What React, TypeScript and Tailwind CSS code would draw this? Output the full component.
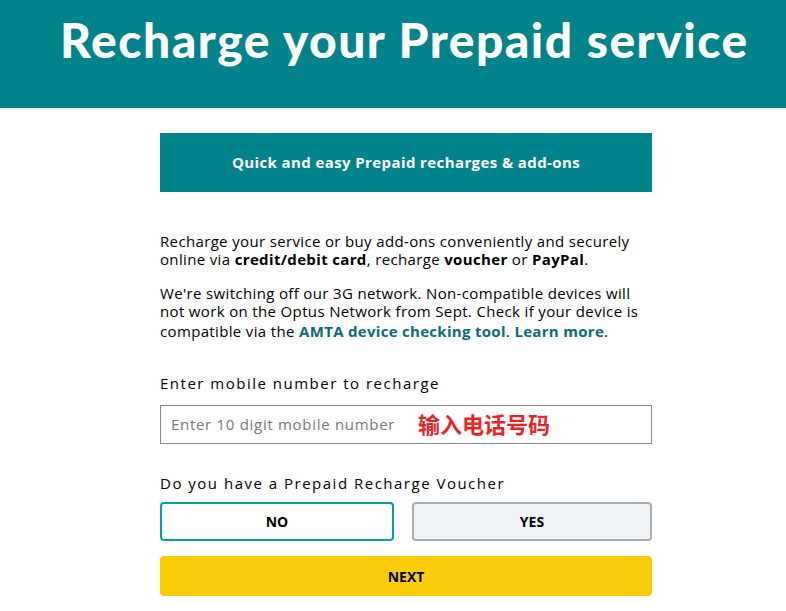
import React, { useState } from 'react';

const App: React.FC = () => {
  const [hasVoucher, setHasVoucher] = useState<'no' | 'yes'>('no');
  const [mobile, setMobile] = useState('');

  return (
    <div className="min-h-screen bg-white font-['Open_Sans','Noto_Sans_CJK_SC',sans-serif] text-black">
      <header className="h-[108px] bg-[#00838a] pl-[60px] pt-[11px]">
        <h1 className="font-['Lato',sans-serif] text-[48px] font-black leading-[58px] tracking-[1.5px] text-white">
          Recharge your Prepaid service
        </h1>
      </header>

      <main className="ml-[160px] w-[492px] pt-[25px]">
        <div className="flex h-[59px] items-center justify-center bg-[#00838a]">
          <p className="text-[15px] font-bold tracking-[0.4px] text-white">Quick and easy Prepaid recharges &amp; add-ons</p>
        </div>

        <p className="mt-[40px] text-[15px] leading-[18px] tracking-[0.35px]">
          Recharge your service or buy add-ons conveniently and securely online via{' '}
          <b>credit/debit card</b>, recharge <b>voucher</b> or <b>PayPal</b>.
        </p>
        <p className="mt-[16px] text-[15px] leading-[18px] tracking-[0.35px]">
          We're switching off our 3G network. Non-compatible devices will not work on the Optus Network from
          Sept. Check if your device is compatible via the{' '}
          <a href="#" className="text-[15px] font-bold leading-[22px] tracking-[0.3px] text-[#0b6a78]">AMTA device checking tool</a>.{' '}
          <a href="#" className="text-[15px] font-bold leading-[22px] tracking-[0.3px] text-[#0b6a78]">Learn more</a>.
        </p>

        <label className="mt-[30px] block text-[15px] tracking-[1.5px]">Enter mobile number to recharge</label>
        <div className="mt-[10px] flex h-[39px] items-center border border-[#8a8a8a] px-[10px]">
          <input
            value={mobile}
            onChange={e => setMobile(e.target.value)}
            placeholder="Enter 10 digit mobile number"
            className="w-[238px] bg-transparent text-[15px] tracking-[0.7px] text-black outline-none placeholder:text-[#777]"
          />
          <span className="ml-[9px] text-[22px] font-bold leading-none text-[#e8242a]">输入电话号码</span>
        </div>

        <p className="mt-[28px] text-[15px] tracking-[1.5px]">Do you have a Prepaid Recharge Voucher</p>
        <div className="mt-[8px] flex gap-[18px]">
          <button
            onClick={() => setHasVoucher('no')}
            className={`h-[39px] w-[234px] rounded-[4px] border-2 text-[14px] font-bold ${
              hasVoucher === 'no' ? 'border-[#00a2a8] bg-white' : 'border-[#a9adb1] bg-[#eff3f6]'
            }`}
          >
            NO
          </button>
          <button
            onClick={() => setHasVoucher('yes')}
            className={`h-[39px] flex-1 rounded-[4px] border-2 text-[14px] font-bold ${
              hasVoucher === 'yes' ? 'border-[#00a2a8] bg-white' : 'border-[#a9adb1] bg-[#eff3f6]'
            }`}
          >
            YES
          </button>
        </div>
        <button className="mt-[15px] h-[40px] w-full rounded-[4px] bg-[#fbcc0a] text-[14px] font-bold">NEXT</button>
      </main>
    </div>
  );
};

export default App;
